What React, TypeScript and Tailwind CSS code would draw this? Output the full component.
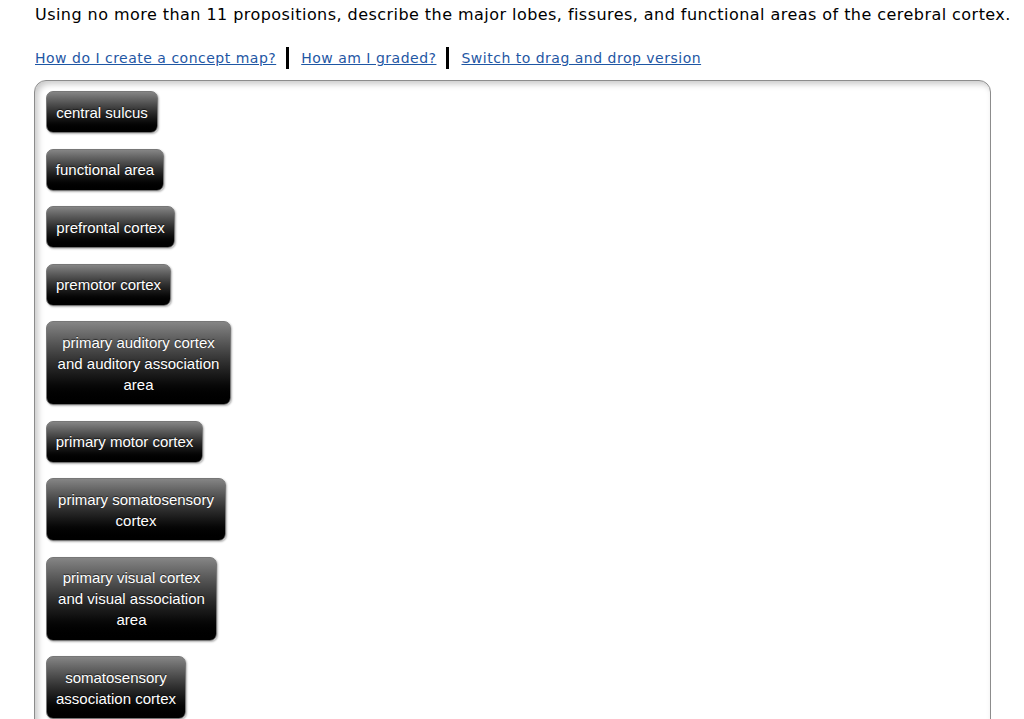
import React from "react";

const items: { label: string; w: string }[] = [
  { label: "central sulcus", w: "w-[112px]" },
  { label: "functional area", w: "w-[118px]" },
  { label: "prefrontal cortex", w: "w-[129px]" },
  { label: "premotor cortex", w: "w-[125px]" },
  { label: "primary auditory cortex and auditory association area", w: "w-[185px]" },
  { label: "primary motor cortex", w: "w-[157px]" },
  { label: "primary somatosensory cortex", w: "w-[180px]" },
  { label: "primary visual cortex and visual association area", w: "w-[171px]" },
  { label: "somatosensory association cortex", w: "w-[140px]" },
];

export default function App() {
  return (
    <div className="w-[1024px] h-[719px] overflow-hidden bg-white" style={{ fontFamily: '"DejaVu Sans", Verdana, sans-serif' }}>
      <div className="pl-[35px] pt-[4px]">
        <p className="text-[16px] leading-[21px] tracking-[0.45px] text-black whitespace-nowrap">
          Using no more than 11 propositions, describe the major lobes, fissures, and functional areas of the cerebral cortex.
        </p>
        <div className="mt-[22px] flex items-center text-[14px] leading-[22px] tracking-[0.5px]">
          <a href="#" className="text-[#1f57a4] underline">How do I create a concept map?</a>
          <span className="ml-[10px] mr-[12px] w-[3px] h-[22px] bg-black" />
          <a href="#" className="text-[#1f57a4] underline">How am I graded?</a>
          <span className="ml-[10px] mr-[12px] w-[3px] h-[22px] bg-black" />
          <a href="#" className="text-[#1f57a4] underline">Switch to drag and drop version</a>
        </div>
      </div>
      <div className="ml-[34px] mt-[11px] w-[957px] h-[700px] rounded-[12px] border border-[#8c8c8c] shadow-[inset_3px_3px_6px_rgba(0,0,0,0.22)] pl-[11px] pt-[10px]">
        <div className="flex flex-col items-start gap-[15.5px]">
          {items.map((it) => (
            <div
              key={it.label}
              className={`${it.w} rounded-[7px] bg-gradient-to-b from-[#858585] via-[#2e2e2e] to-[#000000] border border-[#777777] shadow-[1px_1px_2px_rgba(0,0,0,0.3)] px-[8px] py-[9.5px] text-center text-white text-[15px] leading-[21px] [text-shadow:0_-1px_1px_rgba(0,0,0,0.6)]`}
              style={{ fontFamily: '"Liberation Sans", Arial, sans-serif' }}
            >
              {it.label}
            </div>
          ))}
        </div>
      </div>
    </div>
  );
}
